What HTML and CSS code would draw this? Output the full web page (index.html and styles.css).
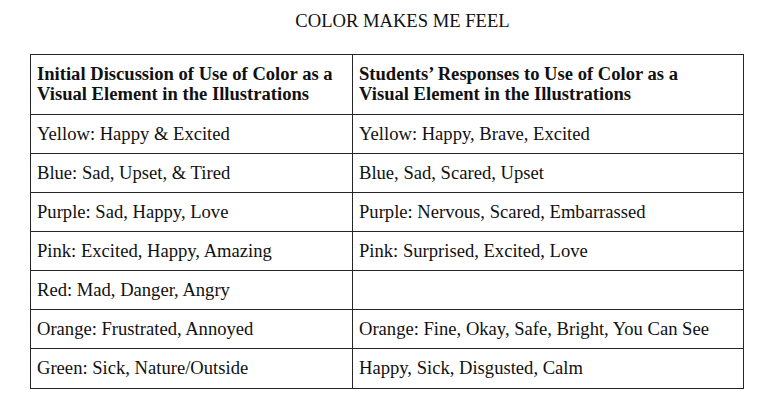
FILE: index.html
```html
<!DOCTYPE html>
<html>
<head>
<meta charset="utf-8">
<link rel="stylesheet" href="styles.css">
</head>
<body>
<div class="title">COLOR MAKES ME FEEL</div>
<table class="grid">
  <colgroup><col class="c1"><col class="c2"></colgroup>
  <thead>
    <tr>
      <th>Initial Discussion of Use of Color as a<br>Visual Element in the Illustrations</th>
      <th>Students’ Responses to Use of Color as a<br>Visual Element in the Illustrations</th>
    </tr>
  </thead>
  <tbody>
    <tr><td>Yellow: Happy &amp; Excited</td><td>Yellow: Happy, Brave, Excited</td></tr>
    <tr><td>Blue: Sad, Upset, &amp; Tired</td><td>Blue, Sad, Scared, Upset</td></tr>
    <tr><td>Purple: Sad, Happy, Love</td><td>Purple: Nervous, Scared, Embarrassed</td></tr>
    <tr><td>Pink: Excited, Happy, Amazing</td><td>Pink: Surprised, Excited, Love</td></tr>
    <tr><td>Red: Mad, Danger, Angry</td><td></td></tr>
    <tr><td>Orange: Frustrated, Annoyed</td><td>Orange: Fine, Okay, Safe, Bright, You Can See</td></tr>
    <tr><td>Green: Sick, Nature/Outside</td><td>Happy, Sick, Disgusted, Calm</td></tr>
  </tbody>
</table>
</body>
</html>
```
FILE: styles.css
```css
html, body {
  margin: 0;
  padding: 0;
  background: #fff;
}
body {
  font-family: "Liberation Serif", "Times New Roman", serif;
  font-size: 18.6px;
  line-height: 20px;
  color: #111;
  width: 770px;
  height: 409px;
  overflow: hidden;
}
.title {
  margin-top: 11px;
  padding-left: 35px;
  text-align: center;
  height: 20px;
}
.grid {
  margin-top: 23px;
  margin-left: 30px;
  width: 713px;
  border-collapse: collapse;
  table-layout: fixed;
}
.c1 { width: 322px; }
.c2 { width: 391px; }
.grid th, .grid td {
  border: 1px solid #262626;
  text-align: left;
  vertical-align: top;
  padding: 9px 6px 9px 6px;
  height: 20px;
}
.grid th {
  font-weight: bold;
  padding-bottom: 10px;
  height: 40px;
}
.grid td {
  font-weight: normal;
}
.grid tbody tr:last-child td {
  padding-bottom: 10px;
}
```
